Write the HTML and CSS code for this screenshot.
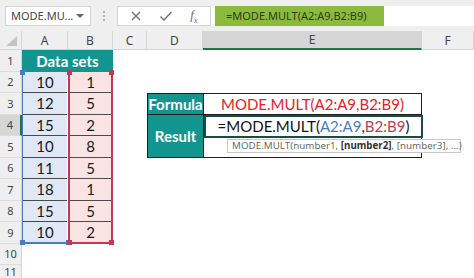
FILE: index.html
```html
<!DOCTYPE html>
<html lang="en">
<head>
  <meta charset="UTF-8">
  <title>MODE.MULT</title>
  <link rel="stylesheet" href="styles.css">
</head>
<body>
  <div class="toolbar">
    <div class="namebox"><span>MODE.MU...</span><span class="caret"></span></div>
    <div class="grip"><i></i><i></i><i></i></div>
    <div class="fbtns">
      <svg width="12" height="12" viewBox="0 0 12 12"><path d="M2 2 L10 10 M10 2 L2 10" stroke="#6d6d6d" stroke-width="1.3" fill="none"/></svg>
      <svg width="14" height="12" viewBox="0 0 14 12"><path d="M1.5 6.5 L5 10 L12.5 2" stroke="#6d6d6d" stroke-width="1.4" fill="none"/></svg>
      <span class="fx">f<sub>x</sub></span>
    </div>
    <div class="fbar"><span class="fbar-text">=MODE.MULT(A2:A9,B2:B9)</span></div>
  </div>

  <div class="sheet">
    <div class="corner"></div>
    <div class="colhead">A</div>
    <div class="colhead">B</div>
    <div class="colhead">C</div>
    <div class="colhead">D</div>
    <div class="colhead active">E</div>
    <div class="colhead">F</div>

    <div class="rowhead r1">1</div>
    <div class="rowhead r2">2</div>
    <div class="rowhead r3">3</div>
    <div class="rowhead r4 active">4</div>
    <div class="rowhead r5">5</div>
    <div class="rowhead r6">6</div>
    <div class="rowhead r7">7</div>
    <div class="rowhead r8">8</div>
    <div class="rowhead r9">9</div>
    <div class="rowhead r10">10</div>
    <div class="rowhead r11">11</div>

    <div class="title">Data sets</div>

    <div class="cell a r2">10</div>
    <div class="cell a r3">12</div>
    <div class="cell a r4">15</div>
    <div class="cell a r5">10</div>
    <div class="cell a r6">11</div>
    <div class="cell a r7">18</div>
    <div class="cell a r8">15</div>
    <div class="cell a r9">10</div>

    <div class="cell b r2">1</div>
    <div class="cell b r3">5</div>
    <div class="cell b r4">2</div>
    <div class="cell b r5">8</div>
    <div class="cell b r6">5</div>
    <div class="cell b r7">1</div>
    <div class="cell b r8">5</div>
    <div class="cell b r9">2</div>

    <div class="range range-a"><i class="h tl"></i><i class="h bl"></i><i class="h br"></i></div>
    <div class="range range-b"><i class="h tl"></i><i class="h tr"></i><i class="h bl"></i><i class="h br"></i></div>

    <div class="label lab-formula">Formula</div>
    <div class="value val-formula">MODE.MULT(A2:A9,B2:B9)</div>
    <div class="label lab-result">Result</div>
    <div class="value val-result">
      <div class="edit">=MODE.MULT(<span class="ref-a">A2:A9</span>,<span class="ref-b">B2:B9</span>)</div>
      <div class="tip">MODE.MULT(number1, <b>[number2]</b>, [number3], ...)</div>
    </div>
  </div>
</body>
</html>
```

FILE: styles.css
```css
* {
  box-sizing: border-box;
}

body {
  margin: 0;
  background: #ffffff;
  font-family: "Noto Sans", sans-serif;
  overflow: hidden;
  height: 278px;
}

/* formula bar */
.toolbar {
  display: flex;
  align-items: center;
  height: 31px;
  padding-left: 5px;
  background: #efefef;
}

.namebox {
  display: flex;
  align-items: center;
  justify-content: space-between;
  width: 86px;
  height: 20px;
  padding: 0 6px 0 5px;
  background: #fff;
  border: 1px solid #d4d4d4;
  color: #444;
  font-size: 11px;
}

.caret {
  width: 0;
  height: 0;
  border-left: 4px solid transparent;
  border-right: 4px solid transparent;
  border-top: 4px solid #666;
}

.grip {
  display: flex;
  flex-direction: column;
  align-items: center;
  gap: 2px;
  width: 26px;
}

.grip i {
  width: 2px;
  height: 2px;
  background: #b5b5b5;
}

.fbtns {
  display: flex;
  align-items: center;
  justify-content: space-around;
  width: 94px;
  height: 20px;
  padding: 0 4px;
  background: #fff;
  border: 1px solid #d4d4d4;
}

.fx {
  font-family: "Liberation Serif", serif;
  font-style: italic;
  font-size: 13px;
  color: #6d6d6d;
}

.fx sub {
  font-size: 8px;
}

.fbar {
  flex: 1;
  height: 20px;
  padding-left: 4px;
  background: #fff;
}

.fbar-text {
  display: block;
  width: 169px;
  height: 20px;
  line-height: 20px;
  padding-left: 11px;
  background: #8cba3c;
  color: #2e3a1a;
  font-size: 11px;
  white-space: nowrap;
}

/* sheet */
.sheet {
  display: grid;
  grid-template-columns: 22px 46px 45px 34px 56px 219px 52px;
  grid-template-rows: 19px repeat(10, 21.5px) 13px;
  font-family: Lato, sans-serif;
}

.corner {
  position: relative;
  background: #efefef;
  border-right: 1px solid #d4d4d4;
  border-bottom: 1px solid #d4d4d4;
}

.corner::after {
  content: "";
  position: absolute;
  right: 4px;
  bottom: 3px;
  border-left: 11px solid transparent;
  border-bottom: 10px solid #c4c4c4;
}

.colhead {
  display: flex;
  align-items: center;
  justify-content: center;
  background: #efefef;
  border-right: 1px solid #d4d4d4;
  border-bottom: 1px solid #d4d4d4;
  color: #444;
  font-family: "Noto Sans", sans-serif;
  font-size: 12px;
}

.colhead.active {
  background: #d6d6d6;
  border-bottom: 2px solid #217346;
}

.rowhead {
  grid-column: 1;
  display: flex;
  align-items: center;
  justify-content: center;
  background: #efefef;
  border-right: 1px solid #d4d4d4;
  border-bottom: 1px solid #dcdcdc;
  color: #444;
  font-family: "Noto Sans", sans-serif;
  font-size: 11px;
}

.rowhead.active {
  background: #d6d6d6;
  border-right: 2px solid #217346;
}

.r1 { grid-row: 2; }
.r2 { grid-row: 3; }
.r3 { grid-row: 4; }
.r4 { grid-row: 5; }
.r5 { grid-row: 6; }
.r6 { grid-row: 7; }
.r7 { grid-row: 8; }
.r8 { grid-row: 9; }
.r9 { grid-row: 10; }
.r10 { grid-row: 11; }
.r11 { grid-row: 12; border-bottom: none; }

.title {
  grid-column: 2 / 4;
  grid-row: 2;
  display: flex;
  align-items: center;
  justify-content: center;
  background: #13958f;
  color: #fff;
  font-weight: bold;
  font-size: 15px;
}

.cell {
  display: flex;
  align-items: center;
  justify-content: center;
  font-size: 15px;
  color: #1a1a1a;
  border-bottom: 1px solid #4a4a4a;
}

.cell.a {
  grid-column: 2;
  background: #dfe8f4;
  margin: 0 1px;
}

.cell.b {
  grid-column: 3;
  background: #fae3e3;
  margin: 0 1px;
}

/* reference highlight boxes */
.range {
  position: relative;
  grid-row: 3 / 11;
  pointer-events: none;
}

.range-a {
  grid-column: 2;
  border-left: 1px solid #4a7cc2;
  border-bottom: 2px solid #4a7cc2;
}

.range-b {
  grid-column: 3;
  border: 2px solid #c4394f;
  border-top: none;
}

.h {
  position: absolute;
  width: 5px;
  height: 5px;
}

.range-a .h { background: #4a7cc2; }
.range-b .h { background: #c4394f; }

.h.tl { left: -3px; top: -2px; }
.h.tr { right: -3px; top: -2px; }
.h.bl { left: -3px; bottom: -3px; }
.h.br { right: -3px; bottom: -3px; }

/* formula table */
.label {
  grid-column: 5;
  display: flex;
  align-items: center;
  justify-content: center;
  background: #13958f;
  color: #fff;
  font-weight: bold;
  font-size: 15px;
  border: 1px solid #1e1e1e;
  border-right: none;
}

.lab-formula { grid-row: 4; }
.lab-result {
  grid-row: 5 / 7;
  border-top: none;
}

.value {
  grid-column: 6;
  border: 1px solid #1e1e1e;
}

.val-formula {
  grid-row: 4;
  display: flex;
  align-items: center;
  justify-content: center;
  color: #e8202a;
  font-size: 15px;
}

.val-result {
  position: relative;
  grid-row: 5 / 7;
  border-top: none;
}

.edit {
  display: flex;
  align-items: center;
  justify-content: center;
  height: 23px;
  margin: 0 -2px 0 0;
  border: 2px solid #1d4b43;
  font-size: 15px;
  color: #111;
}

.ref-a { color: #4a7cc2; }
.ref-b { color: #c4394f; }

.tip {
  position: absolute;
  left: 23px;
  top: 24px;
  width: 234px;
  height: 14px;
  padding-left: 4px;
  line-height: 12px;
  background: #fff;
  border: 1px solid #c8c8c8;
  color: #6b6b6b;
  font-family: "Noto Sans", sans-serif;
  font-size: 9.8px;
  white-space: nowrap;
}

.tip b {
  color: #333;
}
```
